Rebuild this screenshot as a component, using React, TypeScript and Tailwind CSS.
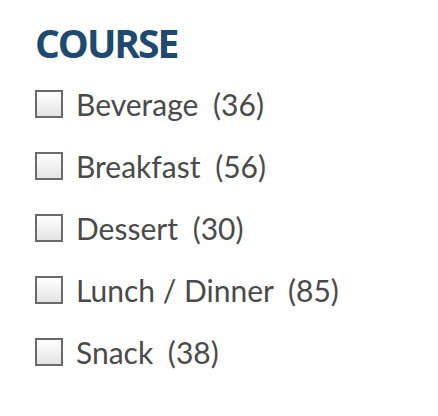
import React from "react";

const items = [
  { label: "Beverage", count: 36 },
  { label: "Breakfast", count: 56 },
  { label: "Dessert", count: 30 },
  { label: "Lunch / Dinner", count: 85 },
  { label: "Snack", count: 38 },
];

export default function App() {
  return (
    <div className="w-[438px] h-[416px] bg-white pl-[35px] pt-[18px]" style={{ fontFamily: '"Open Sans", sans-serif' }}>
      <h2 className="text-[39px] font-bold leading-[50px] text-[#1f4a70] tracking-[-2px]">COURSE</h2>
      <ul className="mt-[5px] flex flex-col">
        {items.map((it) => (
          <li key={it.label} className="h-[62px] flex items-center gap-[13px]">
            <span className="w-[28px] h-[28px] border-2 border-[#6a6a6a] bg-gradient-to-b from-white to-[#e4e4e4] shrink-0" />
            <span className="text-[30px] text-[#4a4a4a] leading-none font-['Lato',sans-serif]">
              {it.label} <span className="ml-[7px]">({it.count})</span>
            </span>
          </li>
        ))}
      </ul>
    </div>
  );
}
